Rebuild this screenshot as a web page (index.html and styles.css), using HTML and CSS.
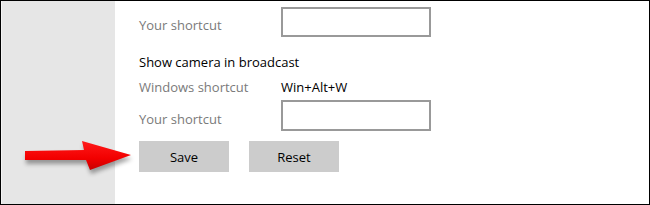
FILE: index.html
```html
<!DOCTYPE html>
<html>
<head>
    <meta charset="utf-8">
    <title>Broadcast shortcuts</title>
    <link rel="stylesheet" href="styles.css">
</head>
<body>
    <div class="frame">
        <div class="sidebar"></div>

        <div class="content">
            <div class="field">
                <span class="label">Your shortcut</span>
                <div class="shortcut-box"></div>
            </div>

            <div class="heading">Show camera in broadcast</div>
            <div class="field plain">
                <span class="label">Windows shortcut</span>
                <span class="value">Win+Alt+W</span>
            </div>
            <div class="field second">
                <span class="label">Your shortcut</span>
                <div class="shortcut-box"></div>
            </div>

            <div class="actions">
                <button class="btn">Save</button>
                <button class="btn">Reset</button>
            </div>
        </div>

        <!-- callout arrow drawn over the screenshot -->
        <svg class="arrow" width="140" height="50" viewBox="0 0 140 50">
            <defs>
                <linearGradient id="red" x1="0" y1="0" x2="0" y2="1">
                    <stop offset="0" stop-color="#ff1a1a"/>
                    <stop offset="0.6" stop-color="#f20000"/>
                    <stop offset="1" stop-color="#c80000"/>
                </linearGradient>
            </defs>
            <polygon points="25,16 84,15 82,6 131,20 90,35 86,25 25,25" fill="url(#red)"/>
        </svg>
    </div>
</body>
</html>
```

FILE: styles.css
```css
body {
    margin: 0;
    background: #fff;
    font-family: 'Open Sans', 'Noto Sans', sans-serif;
    font-size: 13px;
}

.frame {
    width: 650px;
    height: 205px;
    box-sizing: border-box;
    border: 1px solid #000;
    display: flex;
    position: relative;
    overflow: hidden;
}

.sidebar {
    width: 113px;
    background: #e6e6e6;
    border-left: 1px solid #f4f4f4;
    flex-shrink: 0;
}

.content {
    padding: 6px 0 0 24px;
    display: flex;
    flex-direction: column;
}

.field {
    display: flex;
    align-items: flex-end;
    height: 30px;
}

.field.plain {
    height: 20px;
    margin-top: 5px;
    align-items: center;
}

.field.second {
    margin-top: 3px;
    height: 31px;
}

.label {
    width: 142px;
    color: #7a7a7a;
    line-height: 20px;
    padding-bottom: 2px;
}

.field.plain .label {
    padding-bottom: 0;
}

.value {
    color: #000;
    line-height: 20px;
}

.shortcut-box {
    width: 150px;
    height: 100%;
    box-sizing: border-box;
    border: 2px solid #999;
    background: #fff;
}

.heading {
    margin-top: 15px;
    line-height: 20px;
    color: #000;
}

.actions {
    display: flex;
    gap: 20px;
    margin-top: 10px;
}

.btn {
    width: 90px;
    height: 31px;
    border: none;
    background: #cccccc;
    color: #000;
    font-family: inherit;
    font-size: 13px;
    padding: 0;
}

.arrow {
    position: absolute;
    left: -1px;
    top: 134px;
    filter: drop-shadow(1px 4px 2px rgba(0, 0, 0, 0.35));
}
```
